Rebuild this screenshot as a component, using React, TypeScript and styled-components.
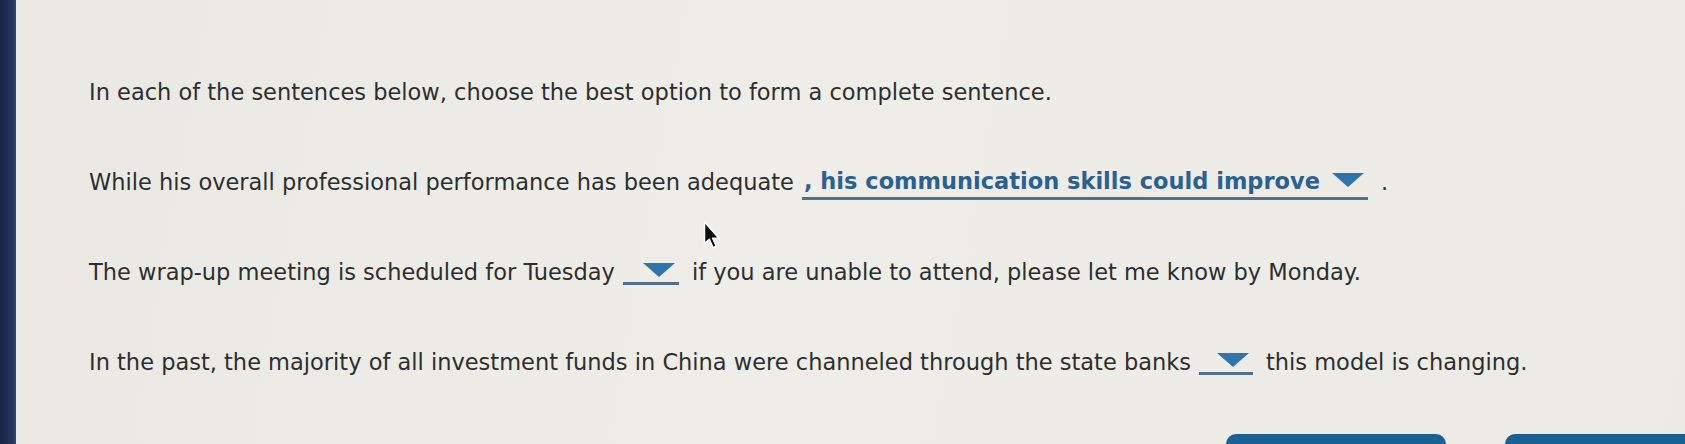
import React from 'react'
import styled, { createGlobalStyle } from 'styled-components'

const GlobalStyle = createGlobalStyle`
  html, body {
    margin: 0;
    padding: 0;
    background: #ebeae5;
  }
  body {
    font-family: "DejaVu Sans", Verdana, sans-serif;
  }
`

const Screen = styled.div`
  display: flex;
  width: 1685px;
  height: 444px;
  overflow: hidden;
  background: linear-gradient(100deg, #e9e8e3 0%, #eeede8 45%, #ebeae5 100%);
  position: relative;
`

const SideBar = styled.div`
  width: 16px;
  flex-shrink: 0;
  background: linear-gradient(90deg, #1a2546 0%, #233560 80%, #3a4a6e 100%);
`

const Content = styled.div`
  flex: 1;
  display: flex;
  flex-direction: column;
  padding: 47px 0 0 73px;
`

const Line = styled.div`
  display: flex;
  align-items: center;
  flex-shrink: 0;
  height: 90px;
  font-size: 22.5px;
  color: #2e2e2e;
  white-space: pre;
`

const Select = styled.span<{ $width?: number }>`
  display: inline-flex;
  align-items: center;
  justify-content: flex-end;
  gap: 12px;
  margin: 0 13px 0 8px;
  padding: 0 4px 3px 2px;
  min-width: ${(p) => p.$width ?? 46}px;
  border-bottom: 3px solid #4f6f8c;
  color: #2b6190;
  font-weight: bold;
  transform: translateY(2px);
`

const Arrow = styled.span`
  width: 0;
  height: 0;
  border-left: 16px solid transparent;
  border-right: 16px solid transparent;
  border-top: 14px solid #2f75aa;
  margin-bottom: 2px;
`

const Buttons = styled.div`
  display: flex;
  flex-shrink: 0;
  gap: 59px;
  margin: 27px 0 0 1137px;
`

const Button = styled.div`
  width: 220px;
  height: 64px;
  border-radius: 10px;
  background: #1b5f93;
`

const Cursor = styled.svg`
  position: absolute;
  left: 702px;
  top: 221px;
`

function Dropdown({ value, width }: { value?: string; width?: number }) {
  return (
    <Select $width={width}>
      {value && <span>{value}</span>}
      <Arrow />
    </Select>
  )
}

export default function App() {
  return (
    <>
      <GlobalStyle />
      <Screen>
        <SideBar />
        <Content>
          <Line>In each of the sentences below, choose the best option to form a complete sentence.</Line>
          <Line>
            While his overall professional performance has been adequate
            <Dropdown value=", his communication skills could improve" />
            .
          </Line>
          <Line>
            The wrap-up meeting is scheduled for Tuesday
            <Dropdown width={50} />
            if you are unable to attend, please let me know by Monday.
          </Line>
          <Line>
            In the past, the majority of all investment funds in China were channeled through the state banks
            <Dropdown width={48} />
            this model is changing.
          </Line>
          <Buttons>
            <Button />
            <Button />
          </Buttons>
        </Content>
        <Cursor width="20" height="30" viewBox="0 0 18 28">
          <path d="M2 1 L2 21 L6.5 17 L10 25 L13 23.6 L9.6 16 L15.5 16 Z" fill="#111" stroke="#fff" strokeWidth="1.4" strokeLinejoin="round" />
        </Cursor>
      </Screen>
    </>
  )
}
